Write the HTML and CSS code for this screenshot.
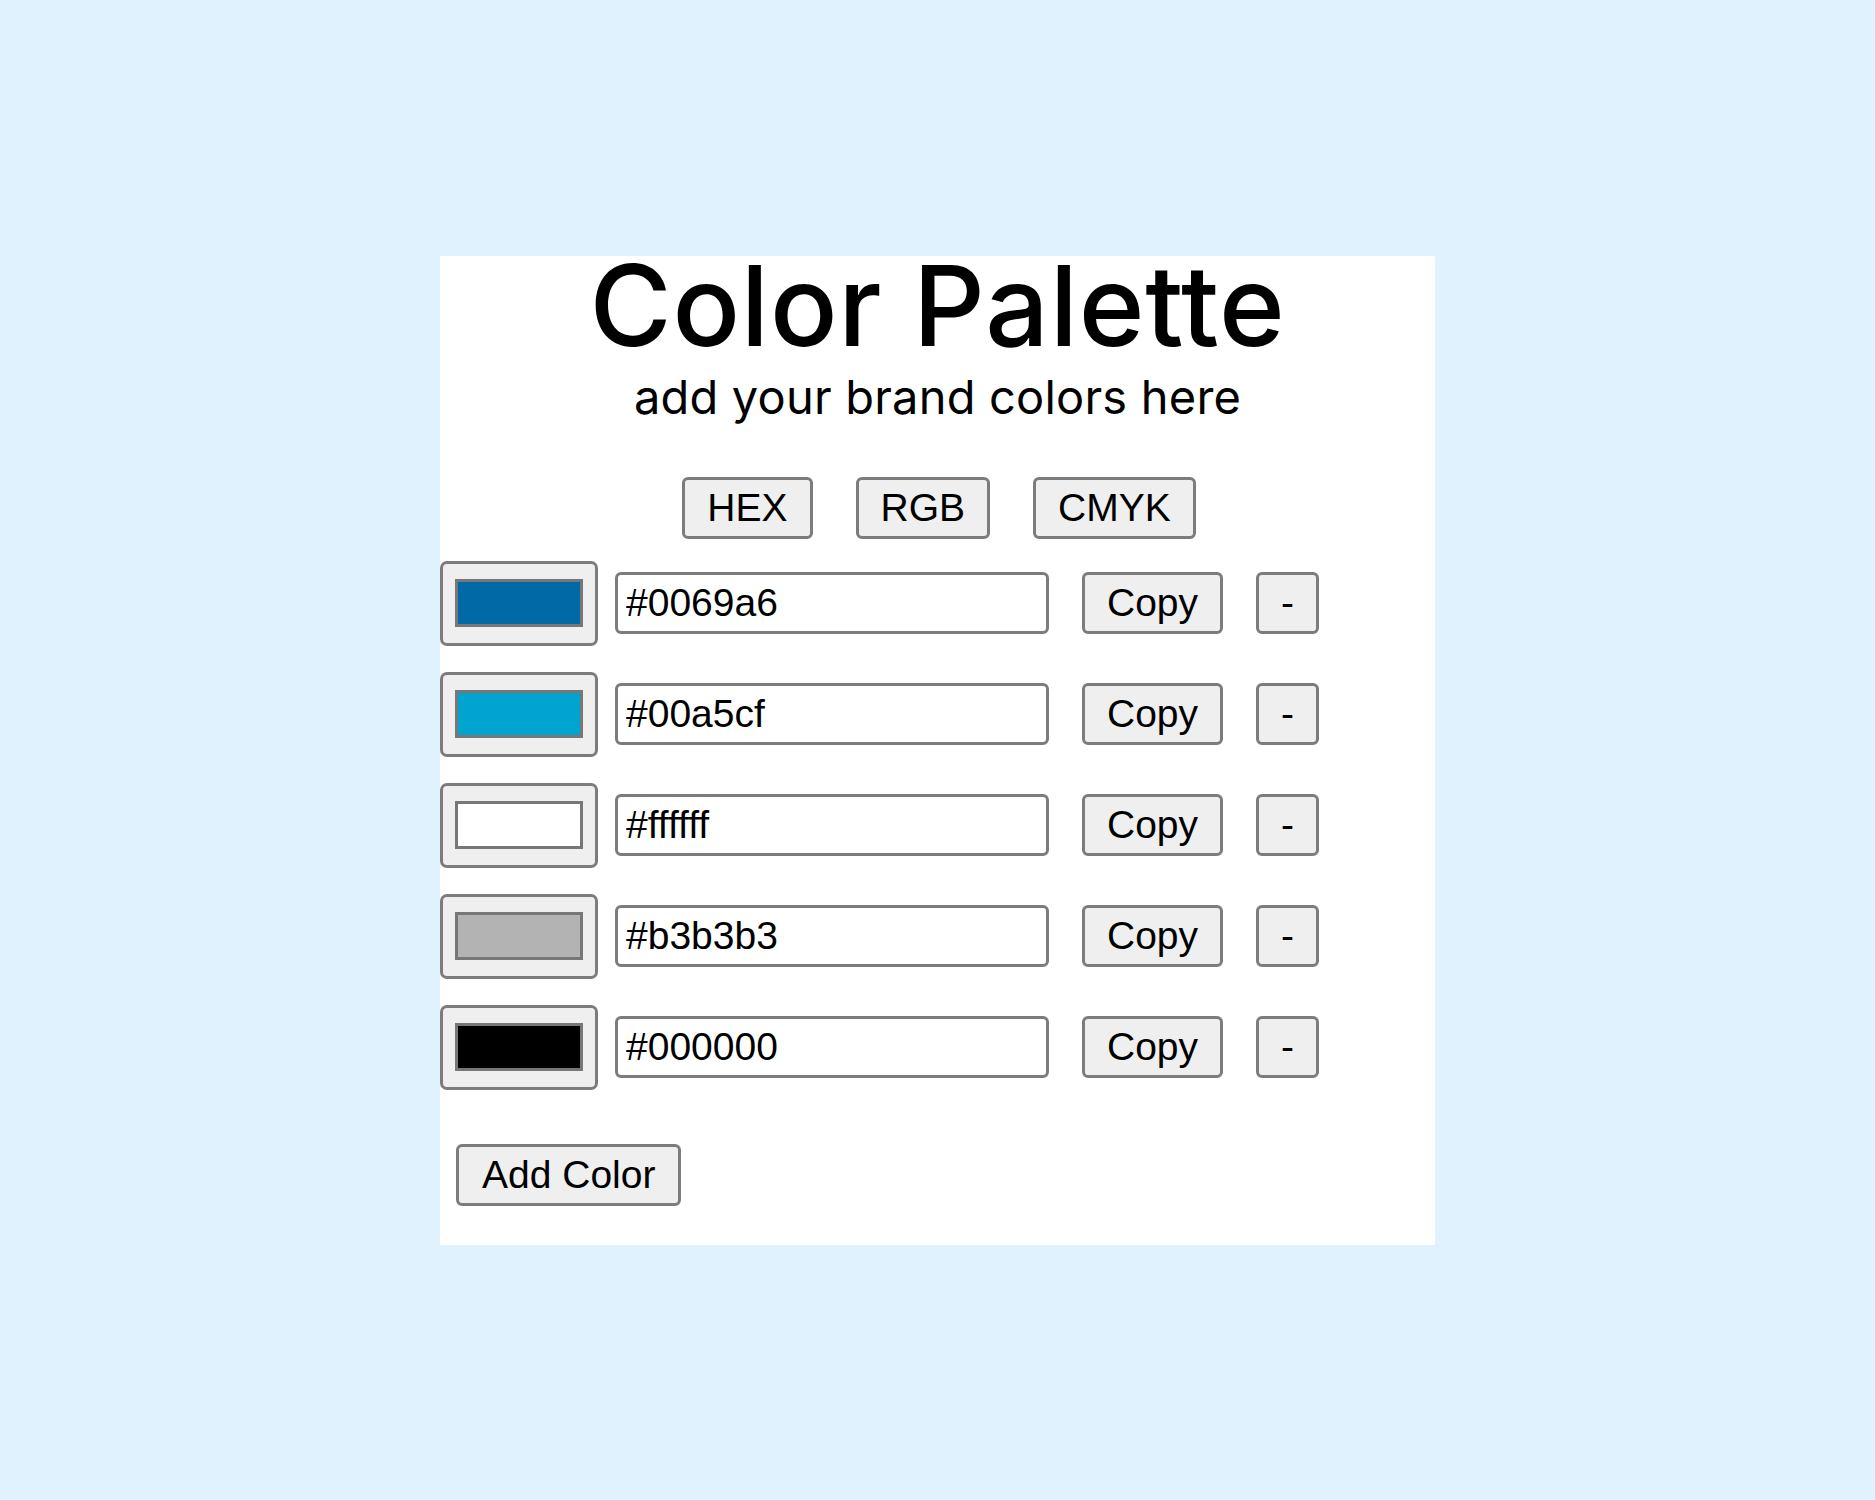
FILE: index.html
```html
<!DOCTYPE html>
<html lang="en">
<head>
<meta charset="utf-8">
<title>Color Palette</title>
<link rel="stylesheet" href="styles.css">
</head>
<body>
<main class="card">
  <h1 class="title">Color Palette</h1>
  <p class="subtitle">add your brand colors here</p>
  <div class="formats">
    <button class="btn">HEX</button>
    <button class="btn">RGB</button>
    <button class="btn">CMYK</button>
  </div>
  <div class="rows">
    <div class="row">
      <button class="swatch"><span class="chip" style="background:#0069a6"></span></button>
      <input class="hex" type="text" value="#0069a6">
      <button class="btn copy">Copy</button>
      <button class="btn remove">-</button>
    </div>
    <div class="row">
      <button class="swatch"><span class="chip" style="background:#00a5cf"></span></button>
      <input class="hex" type="text" value="#00a5cf">
      <button class="btn copy">Copy</button>
      <button class="btn remove">-</button>
    </div>
    <div class="row">
      <button class="swatch"><span class="chip" style="background:#ffffff"></span></button>
      <input class="hex" type="text" value="#ffffff">
      <button class="btn copy">Copy</button>
      <button class="btn remove">-</button>
    </div>
    <div class="row">
      <button class="swatch"><span class="chip" style="background:#b3b3b3"></span></button>
      <input class="hex" type="text" value="#b3b3b3">
      <button class="btn copy">Copy</button>
      <button class="btn remove">-</button>
    </div>
    <div class="row">
      <button class="swatch"><span class="chip" style="background:#000000"></span></button>
      <input class="hex" type="text" value="#000000">
      <button class="btn copy">Copy</button>
      <button class="btn remove">-</button>
    </div>
  </div>
  <div class="actions">
    <button class="btn add">Add Color</button>
  </div>
</main>
</body>
</html>
```

FILE: styles.css
```css
* { box-sizing: border-box; }

html, body {
  margin: 0;
  padding: 0;
}

body {
  background: #e0f2fe;
  min-height: 1500px;
  display: flex;
  align-items: center;
  justify-content: center;
  font-family: "Liberation Sans", Arial, sans-serif;
}

.card {
  width: 995px;
  height: 989px;
  background: #ffffff;
  display: flex;
  flex-direction: column;
}

.title {
  margin: 0;
  font-family: Inter, "Liberation Sans", sans-serif;
  font-weight: 500;
  font-size: 112px;
  letter-spacing: 0.8px;
  line-height: 98px;
  text-align: center;
  color: #000;
}

.subtitle {
  margin: 15px 0 0;
  font-family: Inter, "Liberation Sans", sans-serif;
  font-weight: 400;
  font-size: 47px;
  letter-spacing: 0.2px;
  line-height: 56px;
  text-align: center;
  color: #000;
}

.formats {
  margin-top: 52px;
  display: flex;
  justify-content: center;
  gap: 43px;
  padding-left: 3px;
}

.btn {
  font-family: "Liberation Sans", Arial, sans-serif;
  font-size: 39px;
  line-height: 46px;
  color: #000;
  background: #efefef;
  border: 3px solid #7c7c7c;
  border-radius: 6px;
  padding: 5px 22px;
  margin: 0;
}

.rows {
  margin-top: 22px;
  display: flex;
  flex-direction: column;
  gap: 26px;
}

.row {
  display: flex;
  align-items: center;
  height: 85px;
}

.swatch {
  width: 158px;
  height: 85px;
  padding: 0;
  margin: 0;
  background: #efefef;
  border: 3px solid #7c7c7c;
  border-radius: 7px;
  display: flex;
  align-items: center;
  justify-content: center;
}

.chip {
  display: block;
  width: 128px;
  height: 48px;
  border: 3px solid #777777;
}

.hex {
  width: 434px;
  height: 62px;
  margin-left: 17px;
  padding: 0 8px;
  font-family: "Liberation Sans", Arial, sans-serif;
  font-size: 39px;
  color: #000;
  background: #fff;
  border: 3px solid #7c7c7c;
  border-radius: 6px;
}

.copy {
  margin-left: 33px;
}

.remove {
  margin-left: 33px;
}

.actions {
  margin-top: 54px;
  padding-left: 16px;
  display: flex;
}

.add {
  padding: 5px 23px;
}
```
